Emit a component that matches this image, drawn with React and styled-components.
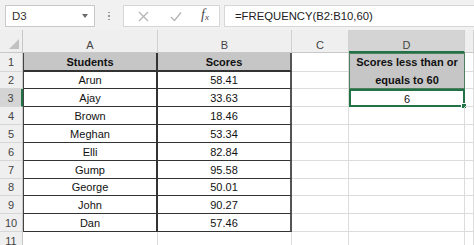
import React from "react";
import styled, { createGlobalStyle, css } from "styled-components";

const Global = createGlobalStyle`
  html, body { margin: 0; padding: 0; background: #ffffff; }
  body { font-family: "Liberation Sans", Arial, sans-serif; overflow: hidden; }
  * { box-sizing: border-box; }
`;

const Page = styled.div`
  width: 474px;
  height: 245px;
  overflow: hidden;
  background: #ffffff;
`;

const FormulaBar = styled.div`
  display: flex;
  align-items: flex-start;
  height: 30px;
  padding: 5px 0 0 5px;
  background: #f1f1f1;
`;

const NameBox = styled.div`
  position: relative;
  width: 90px;
  height: 22px;
  background: #fff;
  border: 1px solid #c9c9c9;
  display: flex;
  align-items: center;
  padding-left: 6px;
  font-size: 11.5px;
  color: #333;
`;

const Caret = styled.span`
  margin-left: auto;
  margin-right: 6px;
  width: 0;
  height: 0;
  border-left: 3.5px solid transparent;
  border-right: 3.5px solid transparent;
  border-top: 4px solid #6b6b6b;
`;

const Grip = styled.div`
  width: 28px;
  height: 22px;
  display: flex;
  flex-direction: column;
  align-items: center;
  justify-content: center;
  gap: 2px;
`;

const Dot = styled.span`
  width: 1.5px;
  height: 1.5px;
  background: #9a9a9a;
`;

const FxButtons = styled.div`
  width: 97px;
  height: 22px;
  background: #fff;
  border: 1px solid #d6d6d6;
  display: grid;
  grid-template-columns: 34px 31px 1fr;
  align-items: center;
  justify-items: center;
  padding-left: 2px;
`;

const Fx = styled.span`
  font-family: "Liberation Serif", "Times New Roman", serif;
  font-style: italic;
  font-size: 14px;
  color: #4a4a4a;
  margin-top: -2px;
  sub {
    font-size: 9px;
    vertical-align: -1px;
  }
`;

const FormulaInput = styled.div`
  flex: 1;
  margin-left: 4px;
  height: 22px;
  background: #fff;
  border: 1px solid #d6d6d6;
  border-right: none;
  display: flex;
  align-items: center;
  padding-left: 10px;
  font-size: 11.3px;
  color: #222;
`;

const Sheet = styled.div`
  display: grid;
  grid-template-columns: 23px 135px 134px 57px 116px 1fr;
  grid-template-rows: 23px 18.5px repeat(10, 17.85px);
  font-size: 11px;
  color: #111;
`;

const Corner = styled.div`
  background: #efefef;
  border-right: 1px solid #c8c8c8;
  border-bottom: 1px solid #c8c8c8;
  display: flex;
  align-items: flex-end;
  justify-content: flex-end;
  padding: 0 3px 3px 0;
`;

const CornerTri = styled.span`
  width: 0;
  height: 0;
  border-left: 10px solid transparent;
  border-bottom: 10px solid #c1c1c1;
`;

const ColHeader = styled.div`
  background: ${(p) => (p.$sel ? "#d4d4d4" : "#efefef")};
  border-right: 1px solid #d0d0d0;
  border-bottom: ${(p) => (p.$sel ? "2px solid #217346" : "1px solid #c8c8c8")};
  display: flex;
  align-items: center;
  justify-content: center;
  padding-top: 8px;
  color: #444;
  font-size: 11px;
`;

const RowHeader = styled.div`
  background: ${(p) => (p.$sel ? "#d4d4d4" : "#efefef")};
  border-right: ${(p) => (p.$sel ? "2px solid #217346" : "1px solid #c8c8c8")};
  border-bottom: 1px solid #d6d6d6;
  display: flex;
  align-items: center;
  justify-content: center;
  color: #444;
  font-size: 11px;
  padding-top: 1px;
`;

const Cell = styled.div`
  position: relative;
  display: flex;
  align-items: center;
  justify-content: center;
  padding-top: 1px;
  border-right: 1px solid #dcdcdc;
  border-bottom: 1px solid #dcdcdc;
  white-space: nowrap;
  ${(p) =>
    p.$head &&
    css`
      background: #c6c6c6;
      font-weight: bold;
    `}
  ${(p) =>
    p.$col === "A" &&
    css`
      border-left: 1px solid #444;
      border-right: 2px solid #333;
      border-bottom: ${p.$head ? "2px" : "1px"} solid #333;
    `}
  ${(p) =>
    p.$col === "B" &&
    css`
      border-right: 2px solid #555;
      border-bottom: ${p.$head ? "2px" : "1px"} solid #333;
    `}
`;

const MergedHead = styled.div`
  grid-row: span 2;
  background: #c6c6c6;
  border: 1px solid #4f7f5e;
  font-weight: bold;
  display: flex;
  align-items: center;
  justify-content: center;
  text-align: center;
  line-height: 18px;
  padding: 0 4px;
`;

const Active = styled.div`
  position: relative;
  border: 2px solid #217346;
  display: flex;
  align-items: center;
  justify-content: center;
  padding-top: 1px;
`;

const Handle = styled.span`
  position: absolute;
  right: -4px;
  bottom: -4px;
  width: 6px;
  height: 6px;
  background: #217346;
  border: 1px solid #fff;
`;

const data = [
  ["Arun", "58.41"],
  ["Ajay", "33.63"],
  ["Brown", "18.46"],
  ["Meghan", "53.34"],
  ["Elli", "82.84"],
  ["Gump", "95.58"],
  ["George", "50.01"],
  ["John", "90.27"],
  ["Dan", "57.46"],
];

function Cross() {
  return (
    <svg width="11" height="11" viewBox="0 0 11 11">
      <path d="M1 1 L10 10 M10 1 L1 10" stroke="#b5b5b5" strokeWidth="1.3" fill="none" />
    </svg>
  );
}

function Check() {
  return (
    <svg width="12" height="11" viewBox="0 0 12 11">
      <path d="M1 6 L4.5 9.5 L11 1.5" stroke="#b5b5b5" strokeWidth="1.3" fill="none" />
    </svg>
  );
}

export default function App() {
  const rows = [];
  rows.push(
    <RowHeader key="r1">1</RowHeader>,
    <Cell key="a1" $col="A" $head>Students</Cell>,
    <Cell key="b1" $col="B" $head>Scores</Cell>,
    <Cell key="c1" />,
    <MergedHead key="d1">Scores less than or equals to 60</MergedHead>,
    <Cell key="e1" />
  );
  data.forEach(([name, score], i) => {
    const r = i + 2;
    rows.push(
      <RowHeader key={"r" + r} $sel={r === 3}>{r}</RowHeader>,
      <Cell key={"a" + r} $col="A">{name}</Cell>,
      <Cell key={"b" + r} $col="B">{score}</Cell>,
      <Cell key={"c" + r} />
    );
    if (r === 3) {
      rows.push(
        <Active key="d3">
          6
          <Handle />
        </Active>
      );
    } else if (r !== 2) {
      rows.push(<Cell key={"d" + r} />);
    }
    rows.push(<Cell key={"e" + r} />);
  });
  rows.push(
    <RowHeader key="r11">11</RowHeader>,
    <Cell key="a11" />,
    <Cell key="b11" />,
    <Cell key="c11" />,
    <Cell key="d11" />,
    <Cell key="e11" />
  );

  return (
    <Page>
      <Global />
      <FormulaBar>
        <NameBox>
          D3
          <Caret />
        </NameBox>
        <Grip>
          <Dot />
          <Dot />
          <Dot />
        </Grip>
        <FxButtons>
          <Cross />
          <Check />
          <Fx>
            f<sub>x</sub>
          </Fx>
        </FxButtons>
        <FormulaInput>=FREQUENCY(B2:B10,60)</FormulaInput>
      </FormulaBar>
      <Sheet>
        <Corner>
          <CornerTri />
        </Corner>
        <ColHeader>A</ColHeader>
        <ColHeader>B</ColHeader>
        <ColHeader>C</ColHeader>
        <ColHeader $sel>D</ColHeader>
        <ColHeader />
        {rows}
      </Sheet>
    </Page>
  );
}
